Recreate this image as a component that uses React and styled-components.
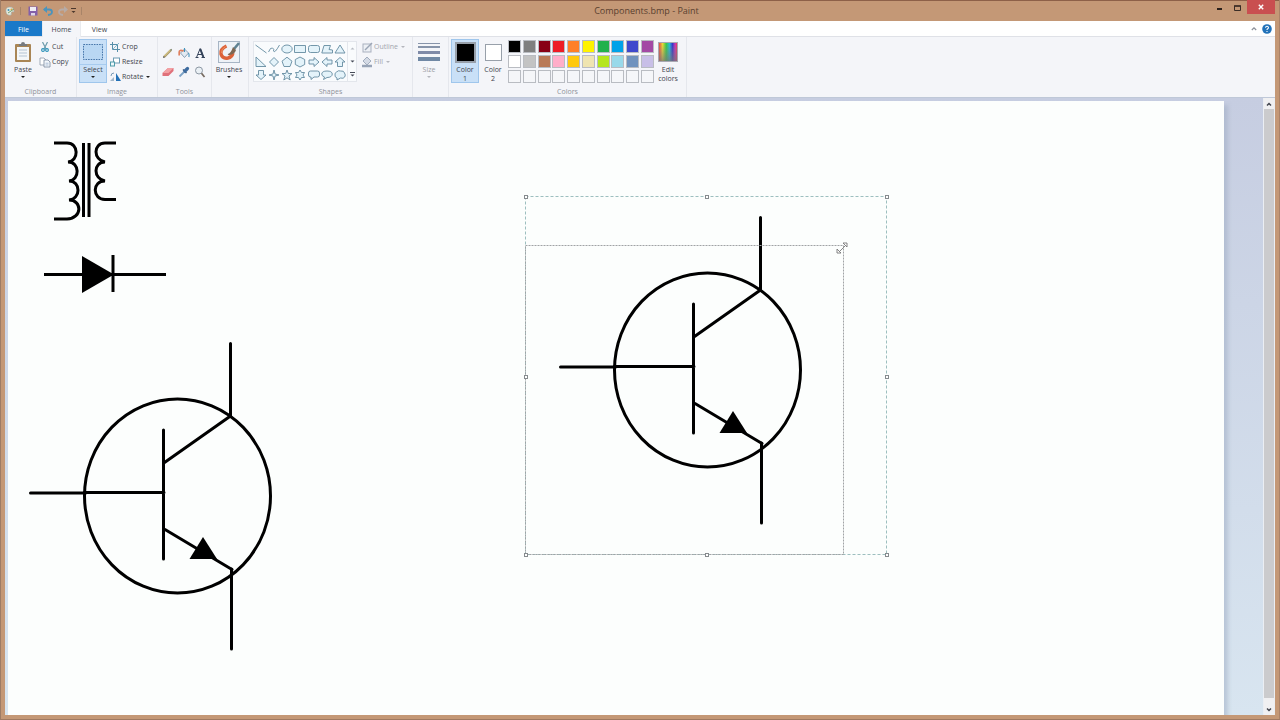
import React from "react";
import styled, { createGlobalStyle, css } from "styled-components";

const GlobalStyle = createGlobalStyle`
  * { box-sizing: border-box; }
  body { margin: 0; background: #c49876; }
  button { font: inherit; color: inherit; margin: 0; padding: 0; border: 0; background: none; border-radius: 0; }
  svg { display: block; flex: none; }
`;

const Window = styled.div`
  min-height: 100vh;
  display: flex;
  flex-direction: column;
  padding: 0 5px 5px;
  background: #c49876;
  box-shadow: inset 1px 0 #9d7c66, inset 0 -1px #a07a62, inset -1px 0 #ab8369, inset 0 1px #8d6048;
  font-family: "Open Sans", "Noto Sans", sans-serif;
  font-size: 7px;
  line-height: 10px;
  color: #41444c;
`;

/* Title bar */
const TitleBar = styled.header`
  display: flex;
  height: 21px;
`;
const QuickAccess = styled.div`
  display: flex;
  align-items: center;
  gap: 1px;
`;
const QuickButton = styled.button`
  width: 14px;
  height: 12px;
  display: grid;
  place-items: center;
`;
const QuickDivider = styled.span`
  width: 1px;
  height: 8px;
  margin: 0 4px;
  background: #a88468;
`;
const Title = styled.h1`
  flex: 1;
  margin: 0;
  padding-right: 4px;
  text-align: center;
  font-size: 9px;
  font-weight: 400;
  line-height: 21px;
  color: #59402f;
`;
const WindowButtons = styled.div`
  display: flex;
  align-items: flex-start;
`;
const WindowButton = styled.button`
  width: ${(p) => (p.$close ? 28 : 18)}px;
  height: ${(p) => (p.$close ? 14 : 16)}px;
  display: grid;
  place-items: center;
  background: ${(p) => (p.$close ? "#c94f50" : "transparent")};
`;

/* Tabs */
const TabRow = styled.nav`
  display: flex;
  height: 16px;
  background: #fff;
  border-bottom: 1px solid #dfe1e7;
`;
const Tab = styled.button`
  width: 37px;
  height: 16px;
  line-height: 16px;
  padding-top: 1px;
  ${(p) => p.$file && css`background: #1a79c9; color: #fff; height: 15px;`}
  ${(p) => p.$active && css`
    width: 39px;
    background: #f4f5f9;
    border: 1px solid #e9ebef;
    border-width: 0 1px;
  `}
`;
const TabTools = styled.div`
  margin-left: auto;
  padding-right: 3px;
  display: flex;
  align-items: center;
  gap: 5px;
`;
const IconButton = styled.button`
  display: grid;
  place-items: center;
`;

/* Ribbon */
const Ribbon = styled.div`
  display: flex;
  background: #f4f5f9;
`;
const Group = styled.section`
  width: ${(p) => p.$width}px;
  padding-top: 2px;
  border-right: 1px solid #e5e7ed;
`;
const GroupBody = styled.div`
  display: flex;
  gap: ${(p) => p.$gap ?? 0}px;
  height: 44px;
  padding-left: ${(p) => p.$inset ?? 2}px;
`;
const GroupLabel = styled.h2`
  margin: 0;
  height: 14px;
  line-height: 18px;
  font-size: 7px;
  font-weight: 400;
  text-align: center;
  color: #8f9299;
`;
const LargeButton = styled.button`
  width: 28px;
  height: 44px;
  display: flex;
  flex-direction: column;
  align-items: center;
  border: 1px solid ${(p) => (p.$selected ? "#9fc6ec" : "transparent")};
  background: ${(p) => (p.$selected ? "#c9e0f7" : "transparent")};
  color: ${(p) => (p.$dim ? "#9b9da4" : "inherit")};
`;
const LargeIcon = styled.span`
  width: 26px;
  height: 25px;
  flex: none;
  display: grid;
  place-items: center;
  border-bottom: 1px solid ${(p) => (p.$split ? "#a7cbee" : "transparent")};
`;
const LargeLabel = styled.span`
  line-height: ${(p) => (p.$double ? 9 : 10)}px;
  text-align: center;
`;
const Caret = styled.span`
  width: 0;
  height: 0;
  border: 2px solid transparent;
  border-bottom-width: 0;
  border-top-color: ${(p) => (p.$dim ? "#b4b6bd" : "#222")};
  margin-top: ${(p) => (p.$below ? 1 : 0)}px;
  margin-left: ${(p) => (p.$after ? 2 : 0)}px;
`;
const SmallStack = styled.div`
  display: grid;
  grid-template-rows: repeat(3, 14px);
  row-gap: 1px;
  align-content: start;
  padding-top: 1px;
`;
const SmallButton = styled.button`
  display: flex;
  align-items: center;
  gap: 1px;
  color: ${(p) => (p.$dim ? "#a3a5ad" : "inherit")};
`;
const SmallIcon = styled.span`
  width: 12px;
  display: grid;
  place-items: center;
`;
const ToolGrid = styled.div`
  display: grid;
  grid-template-columns: repeat(3, 16px);
  grid-auto-rows: 19px;
  padding-top: 4px;
`;
const Gallery = styled.div`
  display: flex;
  width: 104px;
  height: 41px;
  margin-top: 2px;
  border: 1px solid #e3e6ec;
  background: #f9fbfd;
`;
const ShapeGrid = styled.div`
  flex: 1;
  display: grid;
  grid-template-columns: repeat(7, 1fr);
  grid-auto-rows: 13px;
`;
const GalleryScroll = styled.div`
  width: 9px;
  display: grid;
  grid-auto-rows: 13px;
  border-left: 1px solid #e3e6ec;
`;
const ColorChip = styled.span`
  width: ${(p) => p.$size}px;
  height: ${(p) => p.$size}px;
  border: ${(p) => (p.$size > 18 ? 2 : 1)}px solid #98a0aa;
  background: ${(p) => p.$color};
`;
const Palette = styled.div`
  width: 146px;
  height: 43px;
  margin: 1px 0 0 1px;
  display: grid;
  grid-template-columns: repeat(10, 13px);
  grid-auto-rows: 13px;
  justify-content: space-between;
  align-content: space-between;
`;
const Swatch = styled.button`
  border: 1px solid #b9bcc2;
  background: ${(p) => p.$color};
`;

/* Workspace */
const Workspace = styled.main`
  flex: 1;
  display: flex;
  border-top: 1px solid #bfc8d8;
  background: linear-gradient(#c6cde1, #d8e5f0);
`;
const Desk = styled.div`
  flex: 1;
  display: flex;
  padding: 3px 39px 0 3px;
`;
const Paper = styled.div`
  flex: 1;
  display: flex;
  background: #fcfefd;
  box-shadow: 4px 4px 4px #9dabc280;
  clip-path: inset(0 -8px 0 0);
`;
const Drawing = styled.svg`
  flex: 1 1 0;
  min-width: 0;
  height: auto;
  align-self: stretch;
`;
const ScrollBar = styled.div`
  width: 12px;
  display: flex;
  flex-direction: column;
  background: #f0f0f2;
  border: 1px solid #ebeef3;
  border-width: 0 1px;
`;
const ScrollButton = styled.button`
  height: ${(p) => (p.$end ? 17 : 11)}px;
  display: grid;
  place-items: center;
  padding-top: ${(p) => (p.$end ? 7 : 0)}px;
`;
const ScrollThumb = styled.div`
  flex: 1;
  background: #cbcbcd;
`;

const Svg = ({ w = 12, h = w, children, ...rest }) => (
  <svg width={w} height={h} viewBox={`0 0 ${w} ${h}`} fill="none" aria-hidden="true" {...rest}>
    {children}
  </svg>
);

const PasteIcon = () => (
  <Svg w={18} h={22}>
    <rect x="1" y="3" width="16" height="18" rx="1" fill="#a98555" />
    <path d="M3 6h12v13H3z" fill="#f4f6f8" />
    <path d="M5 9h8M5 12h8M5 15h8" stroke="#b4c3d3" />
    <path d="M5 5V3h2q0-2 2-2t2 2h2v2z" fill="#777b80" />
  </Svg>
);
const CutIcon = () => (
  <Svg w={10}>
    <path d="M2.500 0l3.600 7M7.500 0L4 7" stroke="#6d9cac" strokeWidth="1.200" />
    <circle cx="3" cy="8" r="1.400" stroke="#2890b8" strokeWidth="1.100" />
    <circle cx="7" cy="8" r="1.400" stroke="#2890b8" strokeWidth="1.100" />
  </Svg>
);
const CopyIcon = () => (
  <Svg w={12} h={11}>
    <path d="M1 1h4l2 2v5H1z" fill="#fff" stroke="#8c97a8" strokeWidth=".8" />
    <path d="M5 3h4l2 2v5H5z" fill="#f4f8fc" stroke="#7888a0" strokeWidth=".8" />
    <path d="M6.500 6.200h3M6.500 8h3" stroke="#8ba3c3" strokeWidth=".7" />
  </Svg>
);
const SelectIcon = () => (
  <Svg w={22} h={18}>
    <rect x="1.500" y="1.500" width="19" height="15" fill="#b9d7f3" stroke="#4675a9" strokeDasharray="1.600 1" />
  </Svg>
);
const CropIcon = () => (
  <Svg w={10}>
    <path d="M2.500 0v7.500H10M0 2.500h7.500V10" stroke="#578fa9" />
    <path d="M3 7l6-6" stroke="#6faac0" strokeWidth=".8" />
  </Svg>
);
const ResizeIcon = () => (
  <Svg w={10}>
    <rect x="3.500" y="1" width="6" height="5" fill="#fff" stroke="#6c9ab2" />
    <rect x=".5" y="5" width="4" height="4" fill="#eef8fa" stroke="#4f9baa" />
  </Svg>
);
const RotateIcon = () => (
  <Svg w={11} h={10}>
    <path d="M0 9h4V5z" fill="#a1b6ca" />
    <path d="M6 9h5L6 1z" fill="#2471b7" />
    <path d="M1 4q0-3 3-3" stroke="#7899b5" />
  </Svg>
);
const PencilIcon = () => (
  <Svg><path d="M2 10l7-7" stroke="#a9986a" strokeWidth="2.400" /><path d="M2.200 9.300l6.500-6.500" stroke="#ead991" /><path d="M1 11l.6-2 1.400 1.300z" fill="#45484c" /><path d="M8.600 2.400l1 1" stroke="#77806b" strokeWidth="1.500" /></Svg>
);
const FillIcon = ({ dim }) => (
  <Svg>
    <path d={dim ? "M6 1l4 4-4 4-4-4z" : "M6.500 2l4 4-4 4.500L2.500 6z"} fill={dim ? "#d4dae5" : "#e3ebf3"} stroke={dim ? "#9aa6b8" : "#7f97ae"} strokeWidth=".9" />
    {dim ? <path d="M1 10h10" stroke="#98a4b7" strokeWidth="2.500" /> : <path d="M1.200 8.500V5q0-2.500 4.500-1" stroke="#e07f5e" strokeWidth="1.700" />}
    {!dim && <path d="M6.500 1v4M10.500 6q1 2 .3 4" stroke="#4393bd" strokeWidth="1.100" />}
  </Svg>
);
const TextIcon = () => (
  <Svg><path d="M1.500 10.500h3M2.700 10l3.500-8.500L9.500 10M7.500 10.500h3.500M4 7.500h4" stroke="#35435a" strokeWidth="1" /><path d="M6.300 2l3 8" stroke="#35435a" strokeWidth="2" /></Svg>
);
const EraserIcon = () => (
  <Svg><path d="M.5 7L6 2h5.500v3L6.500 10h-6z" fill="#e0707a" /><path d="M.5 7L6 2h5.500l-5 5z" fill="#f2a0a3" /></Svg>
);
const PickerIcon = () => (
  <Svg><path d="M1.500 10.500l5-5" stroke="#7da3c7" strokeWidth="1.800" /><path d="M5 3.500l3.500 3.500" stroke="#3e597c" strokeWidth="1.500" /><path d="M7 5l2.500-2.500" stroke="#3d6b9f" strokeWidth="3.200" strokeLinecap="round" /></Svg>
);
const ZoomIcon = () => (
  <Svg><circle cx="5" cy="4.500" r="3.500" fill="#eaf0f5" stroke="#8d98a4" /><path d="M7.500 7.200l3 3.800" stroke="#75695f" strokeWidth="1.700" /></Svg>
);
const BrushIcon = () => (
  <Svg w={22}>
    <rect x=".5" y=".5" width="21" height="21" fill="#eef2f7" stroke="#a7b5c5" />
    <path d="M8.500 5Q2 8 3 13q1.500 5 7 4 4-1 5-5" stroke="#dc6239" strokeWidth="3.400" />
    <path d="M7.500 5.500Q3 8 3.500 12" stroke="#f09061" strokeWidth="1" />
    <path d="M21 2l-5 6" stroke="#5f8292" strokeWidth="2.600" />
    <path d="M15 6l3 3q-1 4-6 5-3 0-2-1 3-1 5-7z" fill="#7d6753" />
  </Svg>
);
const OutlineIcon = () => (
  <Svg w={11}><rect x="1" y="2" width="8" height="8" fill="#edf0f5" stroke="#a9b1bf" /><path d="M3 8l7-7" stroke="#9ba5b6" strokeWidth="1.500" /></Svg>
);
const SizeIcon = () => (
  <Svg w={22} h={20}>
    <path d="M0 1.500h22" stroke="#8794aa" /><path d="M0 5h22" stroke="#8794aa" strokeWidth="2" />
    <path d="M0 10.500h22" stroke="#7f8aa8" strokeWidth="3" /><path d="M0 17h22" stroke="#7088a5" strokeWidth="4" />
  </Svg>
);
const EditColorsIcon = () => (
  <Svg w={20}>
    <defs>
      <linearGradient id="hue"><stop stopColor="#e44" /><stop offset=".2" stopColor="#ed3" /><stop offset=".4" stopColor="#3c4" /><stop offset=".58" stopColor="#2bd" /><stop offset=".75" stopColor="#33c" /><stop offset=".9" stopColor="#c3b" /><stop offset="1" stopColor="#e35" /></linearGradient>
      <linearGradient id="shade" x2="0" y2="1"><stop stopColor="#888" stopOpacity="0" /><stop offset="1" stopColor="#777" stopOpacity=".75" /></linearGradient>
    </defs>
    <path d="M0 0h20v20H0z" fill="#a8a8b2" /><path d="M1 1h18v18H1z" fill="url(#hue)" /><path d="M1 1h18v18H1z" fill="url(#shade)" />
  </Svg>
);

const shapePaths = [
  ["line", "M.5 2l11 8"],
  ["curve", "M.5 9q2-5 4-4t1 3q1 3 6-6"],
  ["oval", "M.8 6a5.200 4 0 1 0 10.400 0a5.200 4 0 1 0-10.400 0"],
  ["rectangle", "M.5 2.500h11v7H.5z"],
  ["rounded rectangle", "M2.500 2.500h7q2 0 2 2v3q0 2-2 2h-7q-2 0-2-2v-3q0-2 2-2z"],
  ["polygon", "M3 2.500h6.500L8 6.500l3.500.500v3H.8z"],
  ["triangle", "M6 2l5 8H1z"],
  ["right triangle", "M1 1v9.500h10z"],
  ["diamond", "M6 1.500L10.500 6 6 10.500 1.500 6z"],
  ["pentagon", "M6 1.200L11 5.200 9 10.500H3L1 5.200z"],
  ["hexagon", "M6 1l4.700 2.500v5L6 11 1.300 8.500v-5z"],
  ["right arrow", "M1 4h5V1.500L11 6l-5 4.500V8H1z"],
  ["left arrow", "M11 4H6V1.500L1 6l5 4.500V8h5z"],
  ["up arrow", "M3.500 10.500V6H1L6 1.500 11 6H8.500v4.500z"],
  ["down arrow", "M3.500 1.500V6H1l5 4.500L11 6H8.500V1.500z"],
  ["four-point star", "M6 1l1 4 4 1-4 1-1 4-1-4-4-1 4-1z"],
  ["five-point star", "M6 1l1.300 3.500H11L8 7l1.200 4L6 8.800 2.800 11 4 7 1 4.500h3.700z"],
  ["six-point star", "M6 1l1.500 2.500h3L9 6l1.500 2.500h-3L6 11 4.500 8.500h-3L3 6 1.500 3.500h3z"],
  ["rounded callout", "M2.500 2h7q2 0 2 2v2q0 2-2 2H6l-3 2.500V8h-.5q-2 0-2-2V4q0-2 2-2z"],
  ["oval callout", "M3.500 8Q.7 7 .7 5 1 2 6 2t5.300 3Q11 8.500 6 8.500l-3.500 2z"],
  ["cloud callout", "M3 9Q.5 8 1 6 .5 4 2.500 3q2-2 4-1 3.500-.5 4 2 1.500 2 .2 4-1.200 2-4.200 1L3 11z"],
];

const tools = [
  ["Pencil", PencilIcon], ["Fill with color", FillIcon], ["Text", TextIcon],
  ["Eraser", EraserIcon], ["Color picker", PickerIcon], ["Magnifier", ZoomIcon],
];

const palette = [
  "#000", "#7f7f7f", "#880015", "#ed1c24", "#ff7f27", "#fff200", "#22b14c", "#00a2e8", "#3f48cc", "#a349a4",
  "#fff", "#c3c3c3", "#b97a57", "#ffaec9", "#ffc90e", "#efe4b0", "#b5e61d", "#99d9ea", "#7092be", "#c8bfe7",
  ...Array(10).fill("#f5f6f9"),
];

const Small = ({ icon, children, caret, dim }) => (
  <SmallButton $dim={dim}>
    <SmallIcon>{icon}</SmallIcon>
    {children}
    {caret && <Caret $after $dim={dim} />}
  </SmallButton>
);

const Large = ({ icon, children, caret, dim, selected, split, double }) => (
  <LargeButton $selected={selected} $dim={dim}>
    <LargeIcon $split={split}>{icon}</LargeIcon>
    <LargeLabel $double={double}>{children}</LargeLabel>
    {caret && <Caret $below $dim={dim} />}
  </LargeButton>
);

const Transistor = ({ x, y }) => (
  <g transform={`translate(${x} ${y})`} fill="none" stroke="#000" strokeWidth="3" strokeLinecap="round">
    <ellipse cx="148.500" cy="154" rx="93" ry="97" />
    <path d="M1.500 151h55M55 150.500h80M134.500 88v129M201.500 1.500v72M202.500 227v80" />
    <path d="M135.500 120.500l66-46.500M136 187.500l67 40" />
    <path d="M174 195l14 22h-27.500z" fill="#000" stroke="none" />
  </g>
);

const handles = [
  [0, 0], [181, 0], [361, 0], [0, 180], [361, 180], [0, 358], [181, 358], [361, 358],
];

const Selection = () => (
  <g transform="translate(517.500 95.500)" fill="none">
    <rect width="361" height="358" stroke="#9dbfbf" strokeDasharray="3 2" />
    <path d="M0 49h318v309H0z" stroke="#a0a3a5" strokeDasharray="2 1" />
    {handles.map(([x, y]) => (
      <rect key={`${x}-${y}`} x={x - 1} y={y - 1} width="3" height="3" fill="#fff" stroke="#868b8e" />
    ))}
    <path d="M313.500 55.500l6-6" stroke="#888" />
    <path d="M311.500 52.500v4h4zM321.500 50.500v-4h-4z" fill="#fff" stroke="#777" strokeWidth=".9" />
  </g>
);

export default function App() {
  return (
    <>
      <GlobalStyle />
      <Window>
        <TitleBar>
          <QuickAccess>
            <Svg w={10}><path d="M5 1Q0 1 1 6q1 4 5 3 1-1 0-2 1-2 3-1Q9 1 5 1z" fill="#e3e8dc" stroke="#a1aba6" strokeWidth=".6" /><circle cx="3.500" cy="4" r="1" fill="#3b92ba" /><circle cx="6.500" cy="3.500" r="1" fill="#d8a441" /><path d="M3 7l6-4" stroke="#78a173" /></Svg>
            <QuickDivider />
            <QuickButton aria-label="Save"><Svg w={10}><path d="M.5.500h9v9h-9z" fill="#8460a9" /><path d="M2 1h6v4H2z" fill="#f0edf5" /><path d="M3 7h4v2.500H3z" fill="#ddd6e8" /></Svg></QuickButton>
            <QuickButton aria-label="Undo"><Svg w={10}><path d="M1 3.500h5q3 0 3 2.500T5 9" stroke="#4a94bd" strokeWidth="1.800" /><path d="M4 0L0 3.500 4 7z" fill="#4a94bd" /></Svg></QuickButton>
            <QuickButton aria-label="Redo"><Svg w={10}><path d="M8 3.500H4Q1 3.500 1 6t4 3" stroke="#b7aba6" strokeWidth="1.800" /><path d="M6 0l4 3.500L6 7z" fill="#b7aba6" /></Svg></QuickButton>
            <Svg w={5} h={6}><path d="M0 .500h5" stroke="#4c382d" /><path d="M.5 3h4l-2 2z" fill="#4c382d" /></Svg>
            <QuickDivider />
          </QuickAccess>
          <Title>Components.bmp - Paint</Title>
          <WindowButtons>
            <WindowButton aria-label="Minimize"><Svg w={6} h={6}><path d="M0 4h5" stroke="#2b211c" strokeWidth="2" /></Svg></WindowButton>
            <WindowButton aria-label="Maximize"><Svg w={8} h={6}><path d="M.5 1h6v4.500h-6z" stroke="#3b2d26" /><path d="M0 1h7" stroke="#3b2d26" strokeWidth="1.500" /></Svg></WindowButton>
            <WindowButton $close aria-label="Close"><Svg w={6}><path d="M.8.800l4.400 4.400M5.200.800L.8 5.200" stroke="#fff" strokeWidth="1.400" /></Svg></WindowButton>
          </WindowButtons>
        </TitleBar>

        <TabRow>
          <Tab $file>File</Tab>
          <Tab $active>Home</Tab>
          <Tab>View</Tab>
          <TabTools>
            <IconButton aria-label="Collapse ribbon"><Svg w={6}><path d="M.8 4L3 1.800 5.200 4" stroke="#8a8f98" strokeWidth="1.200" /></Svg></IconButton>
            <IconButton aria-label="Help"><Svg w={10}><circle cx="5" cy="5" r="4.800" fill="#2272b9" /><path d="M3.500 3.700Q3.700 2.200 5 2.200t1.500 1.300q0 .8-.8 1.300T5 6M5 7v1" stroke="#fff" strokeWidth="1.100" /></Svg></IconButton>
          </TabTools>
        </TabRow>

        <Ribbon>
          <Group $width={72}>
            <GroupBody $inset={4} $gap={2}>
              <Large icon={<PasteIcon />} caret>Paste</Large>
              <SmallStack>
                <Small icon={<CutIcon />}>Cut</Small>
                <Small icon={<CopyIcon />}>Copy</Small>
              </SmallStack>
            </GroupBody>
            <GroupLabel>Clipboard</GroupLabel>
          </Group>

          <Group $width={81}>
            <GroupBody $gap={2}>
              <Large icon={<SelectIcon />} caret selected split>Select</Large>
              <SmallStack>
                <Small icon={<CropIcon />}>Crop</Small>
                <Small icon={<ResizeIcon />}>Resize</Small>
                <Small icon={<RotateIcon />} caret>Rotate</Small>
              </SmallStack>
            </GroupBody>
            <GroupLabel>Image</GroupLabel>
          </Group>

          <Group $width={54}>
            <GroupBody>
              <ToolGrid>
                {tools.map(([name, Icon]) => (
                  <IconButton key={name} aria-label={name}><Icon /></IconButton>
                ))}
              </ToolGrid>
            </GroupBody>
            <GroupLabel>Tools</GroupLabel>
          </Group>

          <Group $width={37}>
            <GroupBody $inset={3}>
              <Large icon={<BrushIcon />} caret>Brushes</Large>
            </GroupBody>
          </Group>

          <Group $width={164}>
            <GroupBody $inset={4} $gap={4}>
              <Gallery>
                <ShapeGrid>
                  {shapePaths.map(([name, d]) => (
                    <IconButton key={name} aria-label={name}>
                      <Svg><path d={d} stroke="#648ba0" strokeWidth=".9" fill={name === "line" || name === "curve" ? "none" : "#e4f3fa"} /></Svg>
                    </IconButton>
                  ))}
                </ShapeGrid>
                <GalleryScroll>
                  <IconButton aria-label="Previous shapes"><Svg w={5}><path d="M.5 3.500h4l-2-2z" fill="#b8bcc4" /></Svg></IconButton>
                  <IconButton aria-label="Next shapes"><Svg w={5}><path d="M.5 1.500h4l-2 2z" fill="#464b58" /></Svg></IconButton>
                  <IconButton aria-label="All shapes"><Svg w={5}><path d="M0 .500h5" stroke="#464b58" /><path d="M.5 2.500h4l-2 2z" fill="#464b58" /></Svg></IconButton>
                </GalleryScroll>
              </Gallery>
              <SmallStack>
                <Small icon={<OutlineIcon />} caret dim>Outline</Small>
                <Small icon={<FillIcon dim />} caret dim>Fill</Small>
              </SmallStack>
            </GroupBody>
            <GroupLabel>Shapes</GroupLabel>
          </Group>

          <Group $width={36}>
            <GroupBody>
              <Large icon={<SizeIcon />} caret dim>Size</Large>
            </GroupBody>
          </Group>

          <Group $width={238}>
            <GroupBody>
              <Large icon={<ColorChip $size={21} $color="#000" />} selected double>Color<br />1</Large>
              <Large icon={<ColorChip $size={17} $color="#fff" />} double>Color<br />2</Large>
              <Palette>
                {palette.map((color, i) => (
                  <Swatch key={i} $color={color} aria-label={`Palette color ${i + 1}`} />
                ))}
              </Palette>
              <Large icon={<EditColorsIcon />} double>Edit<br />colors</Large>
            </GroupBody>
            <GroupLabel>Colors</GroupLabel>
          </Group>
        </Ribbon>

        <Workspace>
          <Desk>
            <Paper>
              <Drawing role="img" aria-label="Electronic component symbols">
                <g fill="none" stroke="#000" strokeWidth="3">
                  <path d="M46 42h13c12 0 12 18 1 19c12 0 12 18 1 19c12 0 12 18 0 19c13 0 14 18-2 19H46" />
                  <path d="M108 42H97c-12 0-12 17 0 19c-12 0-12 17 0 19c-13 0-13 18 0 18.500h11" />
                  <path d="M75.500 42v74M81 42v74" />
                  <path d="M36 173.500h122M105 154v37" />
                  <path d="M74 155l32 18.500L74 192z" fill="#000" stroke="none" />
                </g>
                <Transistor x={21} y={241} />
                <Transistor x={551} y={115} />
                <Selection />
              </Drawing>
            </Paper>
          </Desk>
          <ScrollBar>
            <ScrollButton aria-label="Scroll up"><Svg w={6}><path d="M1 4.500l2-2 2 2" stroke="#41444e" strokeWidth="1.500" /></Svg></ScrollButton>
            <ScrollThumb />
            <ScrollButton $end aria-label="Scroll down"><Svg w={6}><path d="M1 1.500l2 2 2-2" stroke="#41444e" strokeWidth="1.500" /></Svg></ScrollButton>
          </ScrollBar>
        </Workspace>
      </Window>
    </>
  );
}
